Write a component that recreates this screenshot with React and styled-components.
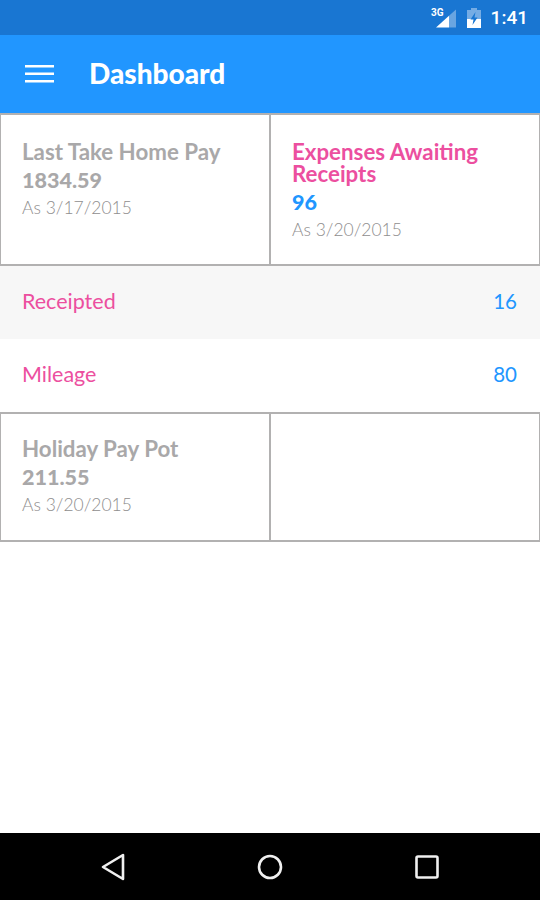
import styled, { createGlobalStyle } from "styled-components";

const GlobalStyle = createGlobalStyle`
  html, body {
    margin: 0;
    padding: 0;
    height: 100%;
    background: #fff;
    font-family: "Lato", "Open Sans", sans-serif;
  }
  #root {
    height: 100%;
  }
`;

const Screen = styled.div`
  display: flex;
  flex-direction: column;
  width: 540px;
  height: 900px;
  overflow: hidden;
`;

const StatusBar = styled.div`
  display: flex;
  align-items: center;
  justify-content: flex-end;
  gap: 11px;
  flex: none;
  height: 35px;
  padding-right: 12px;
  box-sizing: border-box;
  background: #1976d2;
`;

const Clock = styled.span`
  margin-left: -1px;
  font-family: "Roboto", sans-serif;
  font-size: 19px;
  font-weight: 500;
  color: #fff;
`;

const AppBar = styled.header`
  display: flex;
  align-items: center;
  gap: 35px;
  flex: none;
  height: 78px;
  padding: 0 0 0 25px;
  box-sizing: border-box;
  background: #2196ff;
`;

const Title = styled.h1`
  margin: 0 0 2px;
  font-size: 28px;
  font-weight: 900;
  color: #fff;
`;

const Content = styled.main`
  flex: 1;
`;

const CardRow = styled.div`
  display: grid;
  grid-template-columns: 270px 270px;
  height: ${(p) => p.$height}px;
`;

const Card = styled.div`
  box-sizing: border-box;
  padding: ${(p) => p.$top}px 21px 0;
  border: solid #b2b1b1;
  border-width: 2px 1px;
`;

const CardTitle = styled.div`
  font-size: 22.3px;
  font-weight: 700;
  line-height: 22px;
  color: ${(p) => (p.$accent ? "#ec4f9f" : "#a9a8a9")};
`;

const CardValue = styled.div`
  margin-top: 6px;
  font-size: 21.5px;
  font-weight: 900;
  line-height: 22px;
  color: ${(p) => (p.$accent ? "#2196ff" : "#a9a8a9")};
`;

const CardDate = styled.div`
  margin-top: 6px;
  font-size: 17.5px;
  font-weight: 300;
  line-height: 22px;
  color: #8f8e8e;
`;

const ListRow = styled.div`
  display: flex;
  align-items: center;
  justify-content: space-between;
  height: 73px;
  padding: 0 23px 4px 22px;
  box-sizing: border-box;
  background: ${(p) => (p.$shaded ? "#f7f7f7" : "#fff")};
`;

const ListLabel = styled.span`
  font-size: 21.5px;
  color: #ec4f9f;
`;

const ListCount = styled.span`
  font-size: 20.5px;
  color: #2196ff;
`;

const NavBar = styled.nav`
  display: grid;
  grid-template-columns: 1fr 1fr 1fr;
  align-items: center;
  justify-items: center;
  flex: none;
  height: 67px;
  padding: 0 34px;
  box-sizing: border-box;
  background: #000;
`;

function SignalIcon() {
  return (
    <svg width="25" height="22" viewBox="0 0 25 22">
      <text x="0" y="9" fontFamily="Roboto, sans-serif" fontSize="10" fontWeight="700" fill="#fff">
        3G
      </text>
      <path d="M5 20.5 L18 20.5 L18 8.8 Z" fill="#fff" />
      <path d="M18 8.8 L18 20.5 L25 20.5 L25 2.5 Z" fill="#fff" fillOpacity="0.35" />
    </svg>
  );
}

function BatteryIcon() {
  return (
    <svg width="14" height="20" viewBox="0 0 14 20">
      <path d="M4 0 H10 V2 H14 V20 H0 V2 H4 Z" fill="#fff" fillOpacity="0.4" />
      <path d="M0 11 H14 V20 H0 Z" fill="#fff" />
      <path d="M8.5 4 L3.5 11.5 H6.5 L5.5 17 L10.5 9.5 H7.5 Z" fill="#1976d2" />
    </svg>
  );
}

function MenuIcon() {
  return (
    <svg width="29" height="18" viewBox="0 0 29 18">
      <rect x="0" y="0" width="29" height="2.5" fill="#fff" />
      <rect x="0" y="7.5" width="29" height="2.5" fill="#fff" />
      <rect x="0" y="15" width="29" height="2.5" fill="#fff" />
    </svg>
  );
}

function BackIcon() {
  return (
    <svg width="24" height="28" viewBox="0 0 24 28">
      <path d="M22 2 V26 L2 14 Z" fill="none" stroke="#f0f0f0" strokeWidth="2.6" strokeLinejoin="round" />
    </svg>
  );
}

function HomeIcon() {
  return (
    <svg width="26" height="26" viewBox="0 0 26 26">
      <circle cx="13" cy="13" r="11" fill="none" stroke="#f0f0f0" strokeWidth="2.6" />
    </svg>
  );
}

function RecentIcon() {
  return (
    <svg width="24" height="24" viewBox="0 0 24 24">
      <rect x="1.5" y="1.5" width="21" height="21" rx="1.5" fill="none" stroke="#f0f0f0" strokeWidth="2.6" />
    </svg>
  );
}

const rows = [
  { label: "Receipted", count: 16, shaded: true },
  { label: "Mileage", count: 80, shaded: false },
];

export default function App() {
  return (
    <Screen>
      <GlobalStyle />
      <StatusBar>
        <SignalIcon />
        <BatteryIcon />
        <Clock>1:41</Clock>
      </StatusBar>
      <AppBar>
        <MenuIcon />
        <Title>Dashboard</Title>
      </AppBar>
      <Content>
        <CardRow $height={153}>
          <Card $top={26}>
            <CardTitle>Last Take Home Pay</CardTitle>
            <CardValue>1834.59</CardValue>
            <CardDate>As 3/17/2015</CardDate>
          </Card>
          <Card $top={26}>
            <CardTitle $accent>Expenses Awaiting Receipts</CardTitle>
            <CardValue $accent>96</CardValue>
            <CardDate>As 3/20/2015</CardDate>
          </Card>
        </CardRow>
        {rows.map((row) => (
          <ListRow key={row.label} $shaded={row.shaded}>
            <ListLabel>{row.label}</ListLabel>
            <ListCount>{row.count}</ListCount>
          </ListRow>
        ))}
        <CardRow $height={130}>
          <Card $top={24}>
            <CardTitle>Holiday Pay Pot</CardTitle>
            <CardValue>211.55</CardValue>
            <CardDate>As 3/20/2015</CardDate>
          </Card>
          <Card $top={24} />
        </CardRow>
      </Content>
      <NavBar>
        <BackIcon />
        <HomeIcon />
        <RecentIcon />
      </NavBar>
    </Screen>
  );
}
